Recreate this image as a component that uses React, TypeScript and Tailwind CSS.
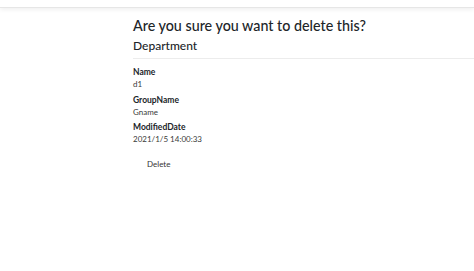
export default function App() {
  const fields = [
    { label: 'Name', value: 'd1' },
    { label: 'GroupName', value: 'Gname' },
    { label: 'ModifiedDate', value: '2021/1/5 14:00:33' },
  ];

  return (
    <div className="min-h-screen bg-white text-[#212529]" style={{ fontFamily: 'Lato, "Open Sans", sans-serif' }}>
      {/* navbar, cut off by the screenshot */}
      <div className="h-[8px] border-b border-[#e6e6e6] shadow-[0_2px_4px_rgba(0,0,0,0.06)]" />

      <main className="pl-[133px] pt-[9px]">
        <h3 className="text-[14.3px] leading-[18px] font-medium">Are you sure you want to delete this?</h3>
        <div className="mt-[3px]">
          <h4 className="text-[12px] leading-[15px] font-medium">Department</h4>
          <hr className="mt-[5px] mb-[7px] border-t border-[#ececec]" />
          <dl className="text-[8.5px] leading-[12px]">
            {fields.map((f) => (
              <div key={f.label}>
                <dt className="font-bold">{f.label}</dt>
                <dd className="mb-[3.5px] text-[8px] text-[#3a3a3a]">{f.value}</dd>
              </div>
            ))}
          </dl>
          <form className="pl-[14px]">
            <button type="button" className="text-[8px] leading-[12px] text-[#333]">
              Delete
            </button>
          </form>
        </div>
      </main>
    </div>
  );
}
